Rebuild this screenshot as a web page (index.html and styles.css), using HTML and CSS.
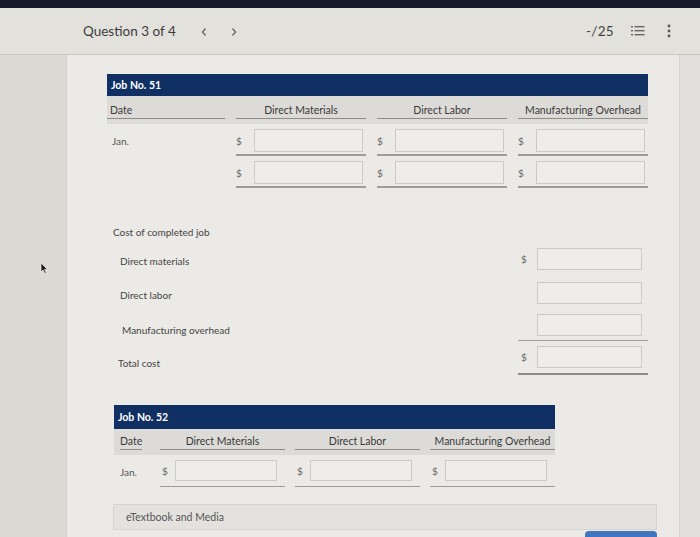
FILE: index.html
```html
<!DOCTYPE html>
<html>
<head>
<meta charset="utf-8">
<link rel="stylesheet" href="styles.css">
</head>
<body>
<div class="topbar"></div>
<div class="header">
  <div class="qtitle">Question 3 of 4</div>
  <div class="nav">
    <svg width="8" height="10" viewBox="0 0 8 10"><path d="M5.5 1.5 L2.5 5 L5.5 8.5" fill="none" stroke="#666" stroke-width="1.3"/></svg>
    <svg width="8" height="10" viewBox="0 0 8 10"><path d="M2.5 1.5 L5.5 5 L2.5 8.5" fill="none" stroke="#666" stroke-width="1.3"/></svg>
  </div>
  <div class="spacer"></div>
  <div class="score">-/25</div>
  <svg class="listicon" width="14" height="12" viewBox="0 0 14 12"><g fill="#666"><rect x="0" y="1" width="2" height="1.4"/><rect x="0" y="5" width="2" height="1.4"/><rect x="0" y="9" width="2" height="1.4"/><rect x="3.5" y="1" width="10" height="1.4"/><rect x="3.5" y="5" width="10" height="1.4"/><rect x="3.5" y="9" width="10" height="1.4"/></g></svg>
  <svg class="kebab" width="4" height="14" viewBox="0 0 4 14"><g fill="#555"><circle cx="2" cy="2" r="1.4"/><circle cx="2" cy="7" r="1.4"/><circle cx="2" cy="12" r="1.4"/></g></svg>
</div>
<div class="main">
  <div class="gutter"></div>
  <div class="panel">
    <div class="job job51">
      <div class="jobhead">Job No. 51</div>
      <div class="grid colrow">
        <div class="ch left">Date</div>
        <div class="ch">Direct Materials</div>
        <div class="ch">Direct Labor</div>
        <div class="ch">Manufacturing Overhead</div>
      </div>
      <div class="grid row">
        <div class="lbl">Jan.</div>
        <div class="cell"><span class="dollar">$</span><span class="box"></span></div>
        <div class="cell"><span class="dollar">$</span><span class="box"></span></div>
        <div class="cell"><span class="dollar">$</span><span class="box"></span></div>
      </div>
      <div class="grid row">
        <div class="lbl"></div>
        <div class="cell"><span class="dollar">$</span><span class="box"></span></div>
        <div class="cell"><span class="dollar">$</span><span class="box"></span></div>
        <div class="cell"><span class="dollar">$</span><span class="box"></span></div>
      </div>
    </div>

    <div class="cost">
      <div class="costtitle">Cost of completed job</div>
      <div class="crow"><div class="clbl in1">Direct materials</div><div class="ccell"><span class="dollar">$</span><span class="box"></span></div></div>
      <div class="crow labor"><div class="clbl in1">Direct labor</div><div class="ccell"><span class="dollar"></span><span class="box"></span></div></div>
      <div class="crow sub"><div class="clbl in2">Manufacturing overhead</div><div class="ccell"><span class="dollar"></span><span class="box"></span></div></div>
      <div class="crow total"><div class="clbl in3">Total cost</div><div class="ccell"><span class="dollar">$</span><span class="box"></span></div></div>
    </div>

    <div class="job job52">
      <div class="jobhead tall">Job No. 52</div>
      <div class="grid2 colrow2">
        <div class="ch left">Date</div>
        <div class="ch">Direct Materials</div>
        <div class="ch">Direct Labor</div>
        <div class="ch">Manufacturing Overhead</div>
      </div>
      <div class="grid2 row2">
        <div class="lbl">Jan.</div>
        <div class="cell"><span class="dollar">$</span><span class="box"></span></div>
        <div class="cell"><span class="dollar">$</span><span class="box"></span></div>
        <div class="cell"><span class="dollar">$</span><span class="box"></span></div>
      </div>
    </div>

    <div class="etext">eTextbook and Media</div>
    <div class="btnrow"><div class="btn"></div></div>
  </div>
  <div class="rgutter"></div>
</div>
<svg class="cursor" width="8" height="12" viewBox="0 0 8 12"><path d="M1 1 L1 10 L3 8 L5 11.5 L6.3 10.8 L4.5 7.5 L7.3 7.3 Z" fill="#222" stroke="#fff" stroke-width="0.6"/></svg>
</body>
</html>
```

FILE: styles.css
```css
html, body {
  margin: 0;
  padding: 0;
  height: 537px;
  overflow: hidden;
}
body {
  background: #dddbd6;
  font-family: Lato, "Open Sans", "Liberation Sans", sans-serif;
  color: #3a3a3a;
  position: relative;
}
.topbar {
  height: 8px;
  background: #151c2b;
}
.header {
  height: 46px;
  background: #e3e1dc;
  border-bottom: 1px solid #c8c6c1;
  display: flex;
  align-items: center;
  padding: 0 29px 0 83px;
}
.qtitle {
  font-size: 13.5px;
  color: #3c3c3c;
}
.nav {
  display: flex;
  gap: 22px;
  margin-left: 24px;
  padding-top: 1px;
}
.spacer { flex: 1; }
.score {
  font-size: 13.5px;
  color: #444;
  letter-spacing: 0.3px;
}
.listicon { margin-left: 17px; }
.kebab { margin-left: 22px; }

.main {
  display: flex;
  height: 482px;
}
.gutter {
  width: 66px;
  background: #dcdad5;
  border-right: 1px solid #d2d0cb;
}
.panel {
  flex: 1;
  background: #ebeae6;
  padding: 19px 0 0 40px;
  border-right: 1px solid #d6d4cf;
}
.rgutter {
  width: 20px;
  background: #e2e0dc;
}

.job51 { width: 541px; }
.jobhead {
  height: 22px;
  line-height: 23px;
  background: #102f62;
  color: #fff;
  font-weight: 700;
  font-size: 10.5px;
  padding-left: 4px;
}
.jobhead.tall { height: 24px; line-height: 25px; }
.grid {
  display: grid;
  grid-template-columns: 118px 130px 130px 130px;
  column-gap: 11px;
}
.colrow {
  height: 28px;
  background: #dcdbd7;
  align-items: end;
}
.ch {
  font-size: 10.5px;
  color: #3a3a3a;
  text-align: center;
  border-bottom: 1.5px solid #8c8c88;
  padding-bottom: 2px;
  margin-bottom: 5px;
}
.ch.left {
  text-align: left;
  padding-left: 3px;
}
.row {
  padding-top: 5px;
}
.lbl {
  font-size: 10px;
  color: #555;
  padding: 6px 0 0 5px;
}
.cell {
  display: flex;
  align-items: center;
  border-bottom: 2px solid #9c9c98;
  padding-bottom: 2px;
}
.dollar {
  width: 18px;
  flex: none;
  font-size: 10px;
  color: #666;
  padding-left: 0;
}
.box {
  flex: 1;
  height: 21px;
  border: 1px solid #cbcac6;
  background: #eeede9;
  margin-right: 3px;
}

.cost {
  width: 541px;
  margin-top: 38px;
}
.costtitle {
  font-size: 10px;
  color: #444;
  padding-left: 6px;
  height: 22px;
}
.crow {
  display: grid;
  grid-template-columns: 1fr 130px;
  align-items: center;
  margin-bottom: 12px;
}
.crow.labor { margin-bottom: 10px; }
.crow.sub {
  margin-bottom: 5px;
}
.crow.sub .ccell {
  border-bottom: 1.5px solid #9c9c98;
  padding-bottom: 4px;
}
.crow.total .ccell {
  border-bottom: 2.5px solid #8a8a86;
  padding-bottom: 5px;
}
.clbl {
  font-size: 10px;
  color: #444;
  padding-top: 4px;
}
.in1 { padding-left: 13px; }
.in2 { padding-left: 15px; }
.in3 { padding-left: 11px; }
.ccell {
  display: flex;
  align-items: center;
}
.ccell .box { height: 20px; margin-right: 6px; }
.ccell .dollar { width: 16px; padding-left: 3px; }

.job52 {
  width: 441px;
  margin: 30px 0 0 7px;
}
.grid2 {
  display: grid;
  grid-template-columns: 36px 125px 125px 125px;
  column-gap: 10px;
}
.colrow2 {
  height: 26px;
  background: #dcdbd7;
  align-items: end;
}
.colrow2 .ch.left {
  padding-left: 0;
  margin-left: 6px;
  margin-right: 8px;
}
.row2 {
  padding-top: 5px;
}
.row2 .lbl { padding-left: 6px; }
.row2 .dollar { padding-left: 2px; width: 13px; }
.row2 .box { height: 19px; margin-right: 8px; }
.row2 .cell { padding-bottom: 5px; border-bottom-width: 1.5px; }

.etext {
  width: 530px;
  margin: 17px 0 0 6px;
  height: 24px;
  line-height: 25px;
  background: #e3e2de;
  border: 1px solid #d5d4d0;
  padding-left: 12px;
  font-size: 10.5px;
  color: #555;
}
.btnrow {
  width: 544px;
  margin-left: 6px;
  display: flex;
  justify-content: flex-end;
  margin-top: 1px;
}
.btn {
  width: 72px;
  height: 20px;
  background: #3f76bd;
  border-radius: 4px 4px 0 0;
}
.cursor {
  position: absolute;
  left: 40px;
  top: 262px;
}
```
